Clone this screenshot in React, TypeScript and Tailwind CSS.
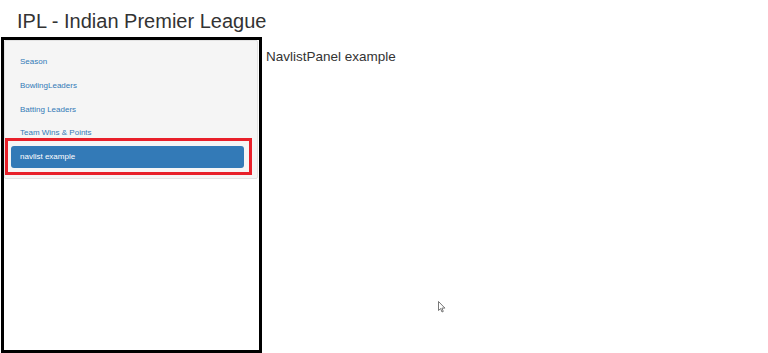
import React from 'react';

const tabs = ['Season', 'BowlingLeaders', 'Batting Leaders', 'Team Wins & Points', 'navlist example'];

export default function App() {
  const active = 'navlist example';

  return (
    <div className="relative h-[353px] w-[768px] overflow-hidden bg-white font-['Liberation_Sans',Arial,sans-serif] text-[#333]">
      <h1 className="pl-[17px] pt-[9px] text-[20px] leading-[24px] font-normal">IPL - Indian Premier League</h1>

      <div className="mt-[4px] flex items-start">
        {/* sidebar */}
        <div className="ml-[1px] h-[316px] w-[261px] shrink-0 border-[3px] border-black">
          <div className="flex h-[139px] w-[254px] flex-col gap-[1.75px] rounded-[2px] border border-[#e3e3e3] bg-[#f5f5f5] pl-[6px] pr-[13px] pt-[10px]">
            {tabs.map((t) => (
              <div
                key={t}
                className={`flex h-[22px] items-center rounded-[3px] pl-[9px] text-[8px] ${
                  t === active ? 'bg-[#337ab7] text-white' : 'text-[#337ab7]'
                }`}
              >
                {t}
              </div>
            ))}
          </div>
        </div>

        {/* main panel */}
        <div className="pl-[4px] pt-[12px]">
          <h4 className="text-[13.5px] leading-[16px]">NavlistPanel example</h4>
        </div>
      </div>

      {/* red highlight annotation */}
      <div className="pointer-events-none absolute left-[5px] top-[138px] h-[37px] w-[247px] border-[3px] border-[#e8202a]" />

      {/* mouse cursor */}
      <svg className="absolute left-[438px] top-[301px]" width="8" height="12" viewBox="0 0 8 12">
        <path d="M0.5 0.5 L0.5 9.5 L2.6 7.6 L4 11 L5.3 10.4 L3.9 7.1 L6.9 7.1 Z" fill="white" stroke="#555" strokeWidth="0.8" strokeLinejoin="round" />
      </svg>
    </div>
  );
}
